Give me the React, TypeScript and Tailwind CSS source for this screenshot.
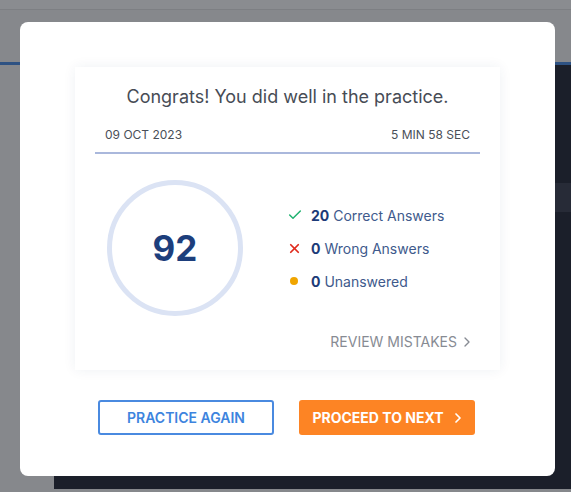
import { Check, X, ChevronRight } from 'lucide-react';

function Stat({ icon, count, label }: { icon: React.ReactNode; count: number; label: string }) {
  return (
    <div className="flex items-center h-[33px]">
      <span className="w-[24px] flex items-center justify-start">{icon}</span>
      <span className="text-[14px] text-[#405a8c]">
        <span className="font-bold text-[#1c3b78]">{count}</span> {label}
      </span>
    </div>
  );
}

export default function App() {
  return (
    <div className="relative w-[571px] h-[492px] overflow-hidden bg-[#86888c] font-['Inter','Noto_Sans',sans-serif]">
      {/* page behind the overlay */}
      <div className="h-[10px] bg-[#8a8c90] border-b border-[#7d7f83]" />
      <div className="h-[55px] border-b-[3px] border-[#2e5283]" />
      <div className="flex h-[424px]">
        <div className="w-[54px] bg-[#86888c]" />
        <div className="flex-1 bg-[#1b1f2a] flex flex-col">
          <div className="h-[118px]" />
          <div className="h-[29px] bg-[#272b37]" />
        </div>
      </div>

      {/* modal */}
      <div className="absolute left-[20px] top-[22px] w-[535px] h-[454px] bg-white rounded-lg flex flex-col items-center">
        <div className="mt-[45px] w-[425px] h-[303px] bg-white shadow-[0_0_12px_rgba(30,50,100,0.07)] px-5 pt-[18px] flex flex-col">
          <h2 className="text-center text-[18px] text-[#474c55] leading-[24px]">
            Congrats! You did well in the practice.
          </h2>
          <div className="mt-[18px] px-2.5 flex justify-between text-[12px] text-[#4a4f58] leading-[16px]">
            <span>09 OCT 2023</span>
            <span>5 MIN 58 SEC</span>
          </div>
          <div className="mt-[9px] h-[2px] bg-[#aab8dc]" />

          <div className="mt-[26px] flex items-center">
            <div className="ml-[12px] w-[136px] h-[136px] rounded-full border-[5px] border-[#dbe3f4] flex items-center justify-center">
              <span className="text-[35px] font-bold text-[#1d3e7c] leading-none">92</span>
            </div>
            <div className="ml-[44px] flex flex-col">
              <Stat icon={<Check size={16} strokeWidth={2.2} className="text-[#1fb270]" />} count={20} label="Correct Answers" />
              <Stat icon={<X size={15} strokeWidth={2.8} className="text-[#e02a1c]" />} count={0} label="Wrong Answers" />
              <Stat
                icon={<span className="ml-[3px] w-[8px] h-[8px] rounded-full bg-[#f0a500]" />}
                count={0}
                label="Unanswered"
              />
            </div>
          </div>

          <div className="mt-[16px] pr-[5px] flex justify-end items-center text-[14px] leading-[20px] text-[#878b93]">
            <span>REVIEW MISTAKES</span>
            <ChevronRight size={16} strokeWidth={2} className="ml-[2px]" />
          </div>
        </div>

        <div className="mt-[30px] flex gap-[25px] -translate-x-[1px]">
          <button className="w-[176px] h-[35px] rounded-[3px] border-2 border-[#4a8ae0] text-[#3d84de] text-[14px] font-semibold">
            PRACTICE AGAIN
          </button>
          <button className="w-[176px] h-[35px] rounded-[3px] bg-[#fd8424] text-white text-[14px] font-bold flex items-center justify-center gap-[6px] pl-[4px]">
            PROCEED TO NEXT
            <ChevronRight size={16} strokeWidth={2.6} />
          </button>
        </div>
      </div>
    </div>
  );
}
